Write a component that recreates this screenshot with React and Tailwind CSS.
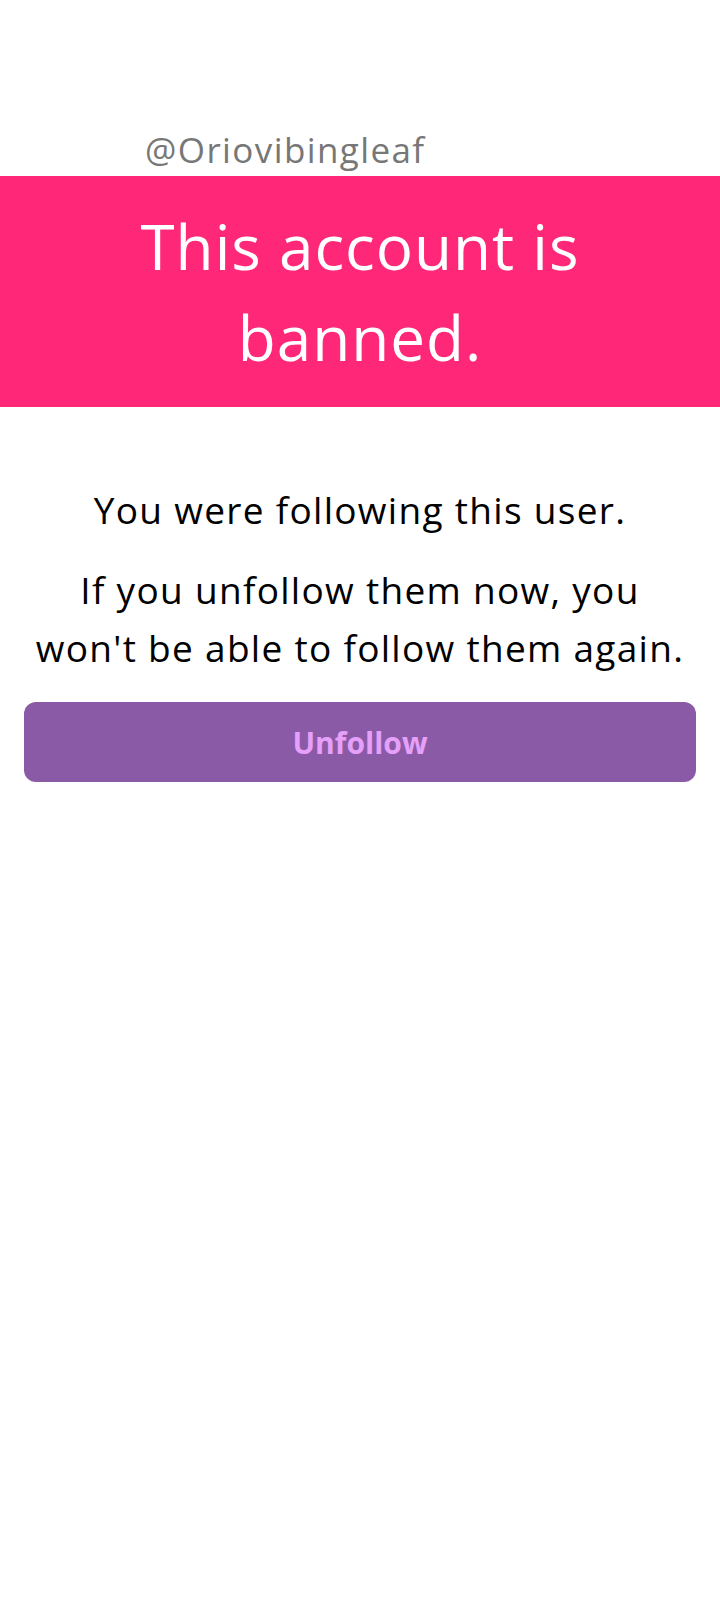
export default function App() {
  return (
    <div
      className="min-h-[1612px] w-[720px] bg-white"
      style={{ fontFamily: '"Open Sans", "Noto Sans", sans-serif' }}
    >
      <div className="h-[176px] flex items-end pl-[145px]">
        <p className="text-[35px] leading-[46px] tracking-[1.4px] text-[#777777] mb-[3px]">
          @Oriovibingleaf
        </p>
      </div>

      <div className="bg-[#ff2878] h-[231px] flex items-center justify-center px-6">
        <h1 className="text-[62px] leading-[91px] tracking-[1px] text-white text-center">
          This account is
          <br />
          banned.
        </h1>
      </div>

      <div className="pt-[74px] px-6 text-center text-black">
        <p className="text-[37px] leading-[58px] tracking-[1.3px]">
          You were following this user.
        </p>
        <p className="text-[37px] leading-[58px] tracking-[1.3px] mt-[22px]">
          If you unfollow them now, you
          <br />
          won't be able to follow them again.
        </p>
        <button className="mt-[25px] w-full h-[80px] rounded-[12px] bg-[#8a5aa6] text-[#e6a0fa] text-[30px] font-bold">
          Unfollow
        </button>
      </div>
    </div>
  );
}
